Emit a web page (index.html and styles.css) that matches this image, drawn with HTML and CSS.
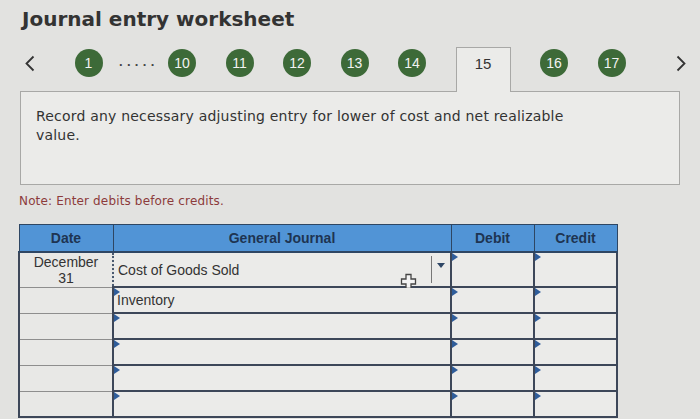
FILE: index.html
```html
<!DOCTYPE html>
<html>
<head>
<meta charset="utf-8">
<link rel="stylesheet" href="styles.css">
</head>
<body>
<div class="page">
  <h1 class="title">Journal entry worksheet</h1>
  <nav class="steps">
    <span class="arrow prev"><svg width="10" height="17" viewBox="0 0 10 17"><polyline points="8.5,1.5 1.5,8.5 8.5,15.5" fill="none" stroke="#333" stroke-width="1.8"/></svg></span>
    <span class="dot">1</span>
    <span class="ellipsis">.....</span>
    <span class="dot">10</span>
    <span class="dot">11</span>
    <span class="dot">12</span>
    <span class="dot">13</span>
    <span class="dot">14</span>
    <span class="tab">15</span>
    <span class="dot">16</span>
    <span class="dot">17</span>
    <span class="arrow next"><svg width="10" height="17" viewBox="0 0 10 17"><polyline points="1.5,1.5 8.5,8.5 1.5,15.5" fill="none" stroke="#333" stroke-width="1.8"/></svg></span>
  </nav>
  <div class="prompt">Record any necessary adjusting entry for lower of cost and net realizable value.</div>
  <p class="note">Note: Enter debits before credits.</p>
  <table class="journal">
    <thead>
      <tr>
        <th class="c-date">Date</th>
        <th class="c-gj">General Journal</th>
        <th class="c-amt">Debit</th>
        <th class="c-amt">Credit</th>
      </tr>
    </thead>
    <tbody>
      <tr class="first">
        <td class="date">December<br>31</td>
        <td class="gj focused">
          <div class="select">
            <span class="sel-text">Cost of Goods Sold</span>
            <span class="sel-btn"><span class="caret"></span></span>
          </div>
          <svg class="cursor" width="17" height="17" viewBox="0 0 17 17"><path d="M6 1.5h5v4.5h4.5v5H11v4.5H6V11H1.5V6H6z" fill="#f4f4f4" stroke="#444" stroke-width="1.3"/></svg>
        </td>
        <td class="amt mark"></td>
        <td class="amt mark"></td>
      </tr>
      <tr>
        <td class="date"></td>
        <td class="gj mark indent">Inventory</td>
        <td class="amt mark"></td>
        <td class="amt mark"></td>
      </tr>
      <tr>
        <td class="date"></td>
        <td class="gj mark"></td>
        <td class="amt mark"></td>
        <td class="amt mark"></td>
      </tr>
      <tr>
        <td class="date"></td>
        <td class="gj mark"></td>
        <td class="amt mark"></td>
        <td class="amt mark"></td>
      </tr>
      <tr>
        <td class="date"></td>
        <td class="gj mark"></td>
        <td class="amt mark"></td>
        <td class="amt mark"></td>
      </tr>
      <tr>
        <td class="date"></td>
        <td class="gj mark"></td>
        <td class="amt mark"></td>
        <td class="amt mark"></td>
      </tr>
    </tbody>
  </table>
</div>
</body>
</html>
```

FILE: styles.css
```css
html, body {
  margin: 0;
  padding: 0;
}
body {
  background: #e2e2e0;
  font-family: "DejaVu Sans", Verdana, sans-serif;
  color: #333;
  width: 700px;
  height: 419px;
  overflow: hidden;
}
.page {
  padding: 7px 0 0 0;
}
.title {
  margin: 0 0 0 22px;
  font-size: 20px;
  font-weight: bold;
  line-height: 24px;
  color: #333;
}
.steps {
  display: flex;
  align-items: flex-start;
  gap: 29.5px;
  height: 44px;
  margin-top: 16px;
  padding-left: 25px;
  width: 661px;
}
.arrow {
  display: flex;
  align-items: center;
  height: 32px;
}
.prev {
  margin-right: 10px;
}
.next {
  margin-left: auto;
}
.dot {
  width: 28px;
  height: 28px;
  margin-top: 2px;
  border-radius: 50%;
  background: #3d6a38;
  color: #f2f2f2;
  font-family: "Liberation Sans", Arial, sans-serif;
  font-size: 14px;
  line-height: 28px;
  text-align: center;
}
.ellipsis {
  margin: 0 -20px 0 -13px;
  height: 32px;
  line-height: 30px;
  font-family: "Liberation Sans", Arial, sans-serif;
  font-weight: bold;
  font-size: 13px;
  letter-spacing: 4.3px;
  color: #444;
}
.tab {
  position: relative;
  z-index: 1;
  width: 53px;
  height: 44px;
  margin-bottom: -1px;
  border: 1px solid #a8a8a6;
  border-bottom: none;
  background: #ebebe9;
  font-family: "Liberation Sans", Arial, sans-serif;
  font-size: 15px;
  color: #333;
  text-align: center;
  line-height: 31px;
}
.prompt {
  box-sizing: border-box;
  margin-left: 20px;
  width: 660px;
  height: 94px;
  border: 1px solid #a8a8a6;
  background: #ebebe9;
  padding: 15px 100px 0 15px;
  font-size: 14px;
  letter-spacing: 0.2px;
  line-height: 19px;
  color: #333;
}
.note {
  margin: 9px 0 0 19px;
  font-size: 12px;
  letter-spacing: 0.15px;
  line-height: 14px;
  color: #8c3b3b;
}
.journal {
  margin: 16px 0 0 18px;
  border-collapse: collapse;
  table-layout: fixed;
  width: 598px;
  font-family: "Liberation Sans", Arial, sans-serif;
  font-size: 14px;
  color: #333;
}
.journal th {
  height: 26px;
  padding: 0;
  background: #5194d6;
  color: #1e3452;
  font-weight: bold;
  font-size: 14px;
  border: 1px solid #2e4663;
  border-bottom: 2px solid #2e4663;
}
.c-date { width: 93px; }
.c-gj { width: 337px; }
.c-amt { width: 82px; }
.journal td {
  position: relative;
  padding: 0;
  height: 24px;
  background: #ebebe9;
  border: 2px solid #3d4759;
}
.journal tr.first td {
  height: 33px;
}
.journal td.date {
  border: 1px solid #8e8e8e;
  border-left: 2px solid #3d4759;
  text-align: center;
  line-height: 16px;
  background: #e8e8e6;
}
.journal tr:last-child td {
  border-bottom: 2px solid #3d4759;
}
.indent {
  padding-left: 3px !important;
  vertical-align: middle;
}
.mark::before {
  content: "";
  position: absolute;
  left: 0;
  top: 0;
  border-top: 4px solid transparent;
  border-bottom: 4px solid transparent;
  border-left: 6px solid #2f5d9a;
}
.journal td.focused {
  border: 2px dotted #4a5a70;
  padding: 0;
}
.select {
  display: flex;
  align-items: center;
  height: 33px;
}
.sel-text {
  flex: 1;
  padding-left: 4px;
}
.sel-btn {
  display: flex;
  align-items: center;
  justify-content: center;
  width: 18px;
  height: 27px;
  border-left: 1px solid #777;
}
.caret {
  width: 0;
  height: 0;
  border-left: 4.5px solid transparent;
  border-right: 4.5px solid transparent;
  border-top: 5px solid #2f4766;
  margin-top: -8px;
}
.cursor {
  position: absolute;
  left: 286px;
  top: 20px;
}
```
